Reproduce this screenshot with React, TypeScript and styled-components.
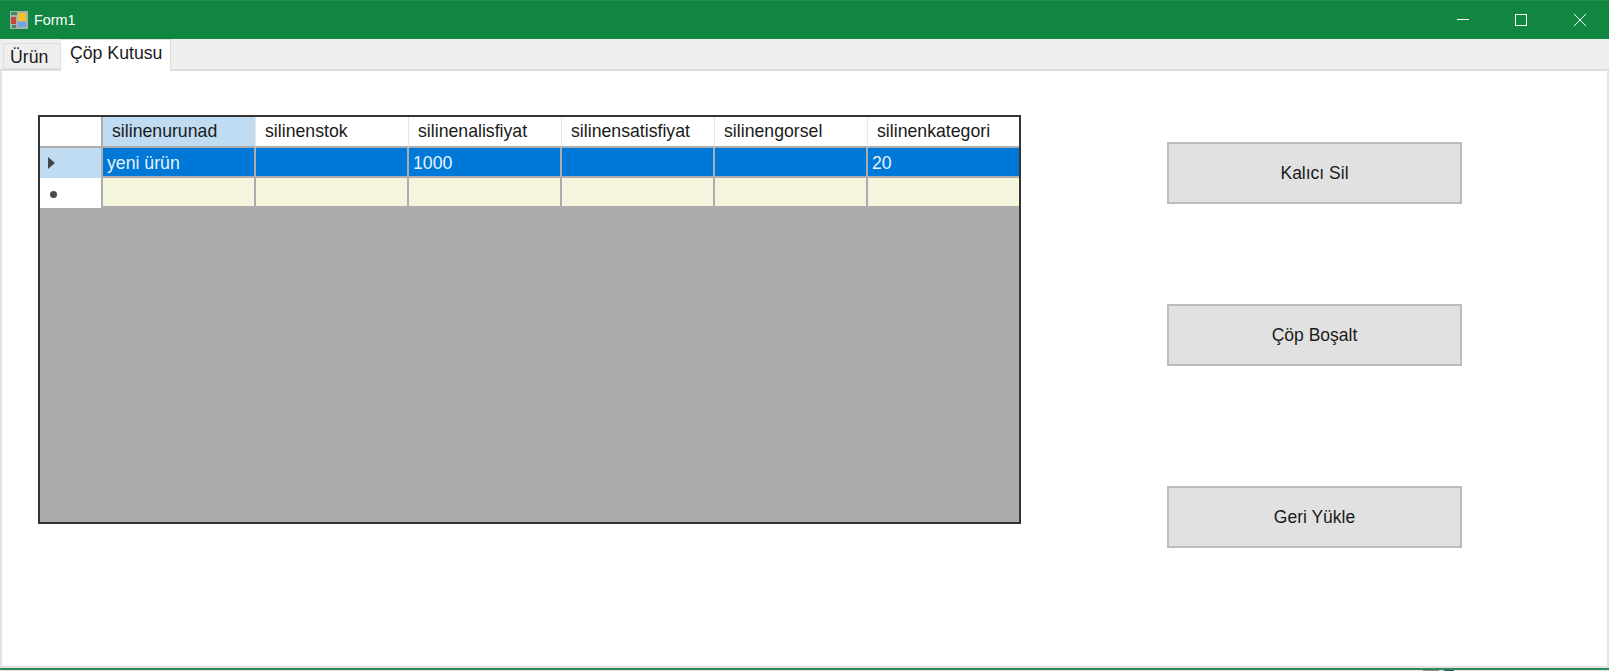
import styled, { createGlobalStyle } from "styled-components";

const GlobalStyle = createGlobalStyle`
  html, body {
    margin: 0;
    padding: 0;
    height: 100%;
    overflow: hidden;
    background: #ffffff;
    font-family: "Liberation Sans", Arial, sans-serif;
  }
  #root {
    height: 100%;
  }
`;

const Window = styled.div`
  display: flex;
  flex-direction: column;
  width: 1609px;
  height: 671px;
  background: #ffffff;
`;

// TITLE BAR
const TitleBar = styled.div`
  display: flex;
  align-items: center;
  flex: 0 0 39px;
  box-sizing: border-box;
  padding-left: 10px;
  background: #118640;
  border-top: 1px solid #25904f;
  color: #ffffff;
`;

const AppTitle = styled.span`
  margin-left: 6px;
  font-size: 14.4px;
`;

const WindowControls = styled.div`
  display: flex;
  margin-left: auto;
`;

const ControlButton = styled.div`
  display: flex;
  align-items: center;
  justify-content: center;
  width: 58.5px;
  height: 38px;
`;

const ControlIcon = styled.svg`
  display: block;
  width: 12px;
  height: 12px;
  fill: none;
  stroke: #ffffff;
  stroke-width: 1;
`;

const FormIcon = () => (
  <svg width="18" height="18" viewBox="0 0 18 18">
    <rect width="18" height="18" fill="#a9b2aa" />
    <rect x="1" y="1" width="6" height="3" fill="#3f8a5c" />
    <rect x="8" y="2" width="8" height="8" fill="#f2c12e" />
    <rect x="1" y="6" width="5" height="7" fill="#c8453a" />
    <rect x="8" y="11" width="8" height="5" fill="#6ea5ea" />
    <rect x="2" y="14" width="4" height="3" fill="#3f8a5c" />
  </svg>
);

// TABS
const TabStrip = styled.div`
  display: flex;
  align-items: flex-end;
  flex: 0 0 32px;
  box-sizing: border-box;
  padding-left: 3px;
  background: #efefef;
  border-bottom: 2px solid #dedede;
`;

const Tab = styled.div<{ $active?: boolean }>`
  display: flex;
  align-items: center;
  box-sizing: border-box;
  height: ${(p) => (p.$active ? "32px" : "26px")};
  width: ${(p) => (p.$active ? "110px" : "58px")};
  margin-bottom: ${(p) => (p.$active ? "-2px" : "0")};
  padding: ${(p) => (p.$active ? "0 0 5px 9px" : "2px 0 0 6px")};
  background: ${(p) => (p.$active ? "#ffffff" : "#efefef")};
  border: 1px solid #dedede;
  border-bottom: ${(p) => (p.$active ? "none" : "1px solid #dedede")};
  border-left: ${(p) => (p.$active ? "none" : "1px solid #dedede")};
  color: #1a1a1a;
  font-size: 17.7px;
  white-space: nowrap;
`;

// PANEL
const Panel = styled.div`
  flex: 1;
  display: flex;
  align-items: flex-start;
  box-sizing: border-box;
  padding: 44px 0 0 36px;
  border-left: 2px solid #e3e3e3;
  border-right: 2px solid #e3e3e3;
  border-bottom: 2px solid #e3e3e3;
  background: #ffffff;
`;

const Grid = styled.div`
  box-sizing: border-box;
  flex: 0 0 auto;
  width: 983px;
  height: 409px;
  background: #ababab;
  border: 2px solid #333333;
`;

const Row = styled.div<{ $height?: number }>`
  display: grid;
  grid-template-columns: 63px repeat(5, 153px) 1fr;
  height: ${(p) => p.$height ?? 30}px;
`;

const HeaderCell = styled.div<{ $selected?: boolean }>`
  display: flex;
  align-items: center;
  box-sizing: border-box;
  padding: 0 0 1px 9px;
  background: ${(p) => (p.$selected ? "#bfdcf3" : "#ffffff")};
  border-right: 1px solid #e6e6e6;
  border-bottom: 2px solid #adadad;
  color: #1a1a1a;
  font-size: 17.7px;
  white-space: nowrap;
  &:last-child {
    border-right: none;
  }
`;

const CornerCell = styled(HeaderCell)`
  padding: 0;
  border-right: 2px solid #adadad;
`;

const RowHeader = styled.div<{ $current?: boolean }>`
  display: flex;
  align-items: center;
  box-sizing: border-box;
  padding-left: 8px;
  background: ${(p) => (p.$current ? "#bfdcf3" : "#ffffff")};
  border-right: 2px solid #adadad;
`;

const Cell = styled.div<{ $variant: "selected" | "new" }>`
  display: flex;
  align-items: center;
  box-sizing: border-box;
  padding: 2px 0 0 4px;
  background: ${(p) => (p.$variant === "selected" ? "#0078d7" : "#f5f4dc")};
  border-right: 2px solid #adadad;
  border-bottom: 2px solid #adadad;
  color: #e8f3fc;
  font-size: 17.7px;
  &:last-child {
    border-right: none;
  }
`;

const Arrow = styled.div`
  width: 0;
  height: 0;
  border-top: 6px solid transparent;
  border-bottom: 6px solid transparent;
  border-left: 7px solid #444444;
`;

const NewRowMark = styled.div`
  width: 7px;
  height: 7px;
  margin: 2px 0 0 2px;
  border-radius: 50%;
  background: #4a4a4a;
`;

const ButtonColumn = styled.div`
  display: flex;
  flex-direction: column;
  margin-left: 146px;
  margin-top: 27px;
`;

const ActionButton = styled.button<{ $gap?: number }>`
  box-sizing: border-box;
  width: 295px;
  height: 62px;
  margin-bottom: ${(p) => p.$gap ?? 0}px;
  padding: 0;
  background: #e1e1e1;
  border: 2px solid #bcbcbc;
  color: #1a1a1a;
  font-family: inherit;
  font-size: 17.5px;
`;

// BOTTOM EDGE
const GreenEdge = styled.div`
  flex: 0 0 2px;
  background: #2f8a58;
`;

const TaskbarSliver = styled.div`
  display: flex;
  flex: 0 0 1px;
  padding-left: 1423px;
  background: #dfe6e1;
`;

const TaskbarMark = styled.div<{ $color: string; $width: number }>`
  width: ${(p) => p.$width}px;
  margin-right: 5px;
  background: ${(p) => p.$color};
`;

const columns = [
  "silinenurunad",
  "silinenstok",
  "silinenalisfiyat",
  "silinensatisfiyat",
  "silinengorsel",
  "silinenkategori",
];

const selectedRow = ["yeni ürün", "", "1000", "", "", "20"];

export default function App() {
  return (
    <Window>
      <GlobalStyle />
      <TitleBar>
        <FormIcon />
        <AppTitle>Form1</AppTitle>
        <WindowControls>
          <ControlButton>
            <ControlIcon viewBox="0 0 12 12">
              <path d="M0 5.5H12" />
            </ControlIcon>
          </ControlButton>
          <ControlButton>
            <ControlIcon viewBox="0 0 12 12">
              <rect x="0.5" y="0.5" width="11" height="11" />
            </ControlIcon>
          </ControlButton>
          <ControlButton>
            <ControlIcon viewBox="0 0 12 12">
              <path d="M0 0L12 12M12 0L0 12" />
            </ControlIcon>
          </ControlButton>
        </WindowControls>
      </TitleBar>
      <TabStrip>
        <Tab>Ürün</Tab>
        <Tab $active>Çöp Kutusu</Tab>
      </TabStrip>
      <Panel>
        <Grid>
          <Row $height={31}>
            <CornerCell />
            {columns.map((name, i) => (
              <HeaderCell key={name} $selected={i === 0}>
                {name}
              </HeaderCell>
            ))}
          </Row>
          <Row>
            <RowHeader $current>
              <Arrow />
            </RowHeader>
            {selectedRow.map((value, i) => (
              <Cell key={i} $variant="selected">
                {value}
              </Cell>
            ))}
          </Row>
          <Row>
            <RowHeader>
              <NewRowMark />
            </RowHeader>
            {columns.map((name) => (
              <Cell key={name} $variant="new" />
            ))}
          </Row>
        </Grid>
        <ButtonColumn>
          <ActionButton $gap={100}>Kalıcı Sil</ActionButton>
          <ActionButton $gap={120}>Çöp Boşalt</ActionButton>
          <ActionButton>Geri Yükle</ActionButton>
        </ButtonColumn>
      </Panel>
      <GreenEdge />
      <TaskbarSliver>
        <TaskbarMark $color="#8f8f8f" $width={16} />
        <TaskbarMark $color="#2b5a80" $width={10} />
      </TaskbarSliver>
    </Window>
  );
}
